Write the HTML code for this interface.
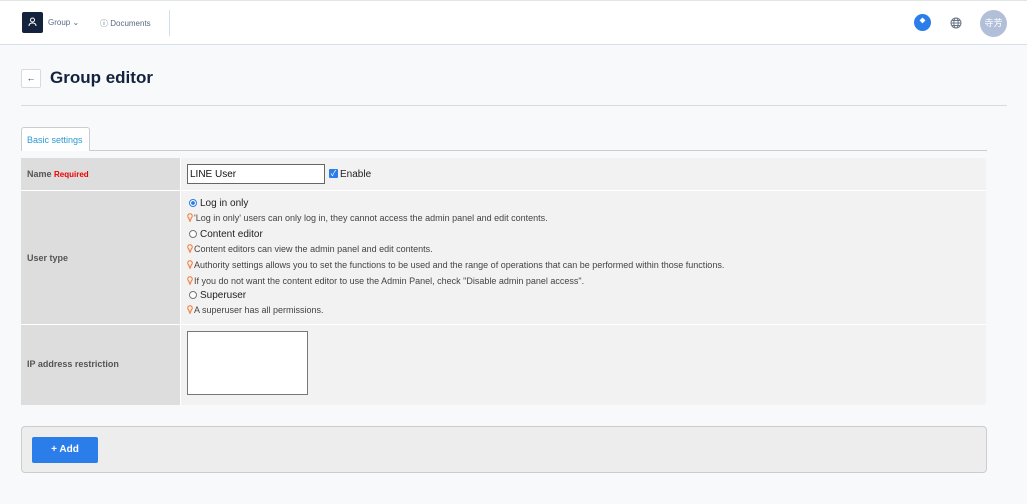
<!DOCTYPE html>
<html><head><meta charset="utf-8"><style>
*{box-sizing:border-box;margin:0;padding:0}
body{width:1027px;height:504px;background:#f8f9fb;font-family:"Liberation Sans","Noto Sans CJK JP",sans-serif;position:relative;overflow:hidden;color:#333}
.hdr{position:absolute;left:0;top:0;width:1027px;height:45px;background:#fff;border-top:1px solid #dfe6e3;border-bottom:1px solid #d5dfe9}
.abs{position:absolute}
.hint{position:absolute;left:187px;font-size:9px;color:#444;white-space:nowrap}
.hint svg{display:inline-block;vertical-align:-1px;margin-right:1px}
.rad{position:absolute;left:189px;font-size:10px;color:#222;white-space:nowrap}
.rad i{display:inline-block;width:8px;height:8px;border:1px solid #777;border-radius:50%;margin-right:3px;vertical-align:-1px;background:#fff}
</style></head><body>
<svg width="0" height="0" style="position:absolute"><defs><symbol id="b" viewBox="0 0 6 9"><path d="M3 0.8a2.2 2.2 0 0 0-1.3 4L2 6.3h2l.3-1.5A2.2 2.2 0 0 0 3 .8z" fill="none" stroke="#f07a3a" stroke-width="1"/><path d="M2 7.3h2M2.3 8.3h1.4" stroke="#f07a3a" stroke-width=".9"/></symbol></defs></svg>
<div class="hdr">
 <div class="abs" style="left:22px;top:11px;width:21px;height:21px;background:#13233d;border-radius:2px"></div>
 <svg class="abs" style="left:28px;top:16px" width="9" height="10" viewBox="0 0 9 10"><circle cx="4.5" cy="3" r="2" fill="none" stroke="#fff" stroke-width="1"/><path d="M1 9c0-2 1.5-3 3.5-3s3.5 1 3.5 3" fill="none" stroke="#fff" stroke-width="1"/></svg>
 <div class="abs" style="left:48px;top:17px;font-size:8px;color:#5a6a85">Group ⌄</div>
 <div class="abs" style="left:100px;top:17px;font-size:8px;color:#5a6a85">ⓘ Documents</div>
 <div class="abs" style="left:169px;top:9px;width:1px;height:26px;background:#d5dde6"></div>
 <div class="abs" style="left:914px;top:13px;width:17px;height:17px;border-radius:50%;background:#2b7de9;color:#fff;font-size:6px;text-align:center;line-height:17px">◆</div>
 <svg class="abs" style="left:950px;top:16px" width="12" height="12" viewBox="0 0 12 12" fill="none" stroke="#6a7588" stroke-width="1"><circle cx="6" cy="6" r="5"/><ellipse cx="6" cy="6" rx="2.2" ry="5"/><path d="M1 6h10M1.8 3.5h8.4M1.8 8.5h8.4"/></svg>
 <div class="abs" style="left:980px;top:9px;width:27px;height:27px;border-radius:50%;background:#b1c0d8;color:#fff;font-size:9px;text-align:center;line-height:27px">寺芳</div>
</div>
<div class="abs" style="left:21px;top:69px;width:20px;height:19px;border:1px solid #d5dbe3;background:#fff;border-radius:2px;font-size:9px;text-align:center;line-height:17px;color:#334">←</div>
<div class="abs" style="left:50px;top:68px;font-size:17px;font-weight:bold;color:#13233d">Group editor</div>
<div class="abs" style="left:21px;top:105px;width:986px;height:1px;background:#d5dbe3"></div>
<div class="abs" style="left:21px;top:127px;width:69px;height:24px;border:1px solid #ccc;border-bottom:none;background:#fff;border-radius:3px 3px 0 0;font-size:9px;color:#2a9bd1;padding:7px 0 0 5px">Basic settings</div>
<div class="abs" style="left:90px;top:150px;width:897px;height:1px;background:#ccc"></div>
<div class="abs" style="left:21px;top:158px;width:965px;height:247px;background:#f2f2f2;border-radius:3px"></div>
<div class="abs" style="left:21px;top:158px;width:159px;height:247px;background:#dddddd"></div>
<div class="abs" style="left:180px;top:158px;width:1px;height:247px;background:#fff"></div>
<div class="abs" style="left:21px;top:190px;width:965px;height:1px;background:#fff"></div>
<div class="abs" style="left:21px;top:324px;width:965px;height:1px;background:#fff"></div>
<div class="abs" style="left:27px;top:169px;font-size:9px;font-weight:bold;color:#555">Name <span style="color:#e00;font-size:8px">Required</span></div>
<div class="abs" style="left:27px;top:253px;font-size:9px;font-weight:bold;color:#555">User type</div>
<div class="abs" style="left:27px;top:359px;font-size:9px;font-weight:bold;color:#555">IP address restriction</div>
<div class="abs" style="left:187px;top:164px;width:138px;height:20px;border:1px solid #666;background:#fff;font-size:10px;color:#111;padding:4px 2px">LINE User</div>
<div class="abs" style="left:329px;top:169px;width:9px;height:9px;background:#2b7de9;border-radius:1px;color:#fff;font-size:8px;line-height:9px;text-align:center">✓</div>
<div class="abs" style="left:340px;top:169px;font-size:10px;color:#222">Enable</div>
<div class="rad" style="top:198px"><i style="border-color:#2b7de9;background:radial-gradient(#2b7de9 40%,#fff 50%)"></i>Log in only</div>
<div class="hint" style="top:213px"><svg width="6" height="9"><use href="#b"/></svg>'Log in only' users can only log in, they cannot access the admin panel and edit contents.</div>
<div class="rad" style="top:229px"><i></i>Content editor</div>
<div class="hint" style="top:244px"><svg width="6" height="9"><use href="#b"/></svg>Content editors can view the admin panel and edit contents.</div>
<div class="hint" style="top:260px"><svg width="6" height="9"><use href="#b"/></svg>Authority settings allows you to set the functions to be used and the range of operations that can be performed within those functions.</div>
<div class="hint" style="top:276px"><svg width="6" height="9"><use href="#b"/></svg>If you do not want the content editor to use the Admin Panel, check "Disable admin panel access".</div>
<div class="rad" style="top:290px"><i></i>Superuser</div>
<div class="hint" style="top:305px"><svg width="6" height="9"><use href="#b"/></svg>A superuser has all permissions.</div>
<div class="abs" style="left:187px;top:331px;width:121px;height:64px;border:1px solid #777;background:#fff"></div>
<div class="abs" style="left:21px;top:426px;width:966px;height:47px;background:#ededed;border:1px solid #ccc;border-radius:4px"></div>
<div class="abs" style="left:32px;top:437px;width:66px;height:26px;background:#2b7de9;border-radius:2px;color:#fff;font-size:10px;font-weight:bold;text-align:center;line-height:25px">+ Add</div>
</body></html>
